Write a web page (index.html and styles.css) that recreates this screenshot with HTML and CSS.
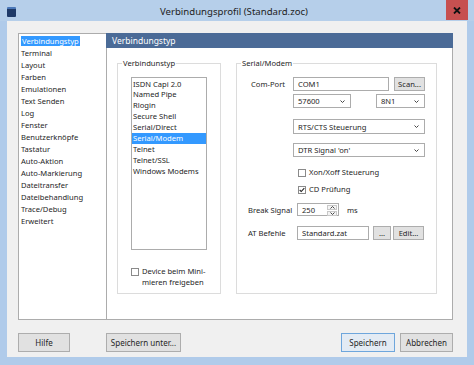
FILE: index.html
```html
<!DOCTYPE html>
<html lang="de">
<head>
    <meta charset="UTF-8">
    <title>Verbindungsprofil (Standard.zoc)</title>
    <link rel="stylesheet" href="styles.css">
</head>
<body>
    <div class="window">
        <div class="titlebar">
            <span class="app-icon"></span>
            <span class="title">Verbindungsprofil (Standard.zoc)</span>
            <span class="close">
                <svg width="8" height="7" viewBox="0 0 8 7"><path d="M1 0.5 L7 6.5 M7 0.5 L1 6.5" stroke="#111" stroke-width="1.8"/></svg>
            </span>
        </div>
        <div class="client">
            <div class="main">
                <ul class="nav">
                    <li><span class="sel">Verbindungstyp</span></li>
                    <li>Terminal</li>
                    <li>Layout</li>
                    <li>Farben</li>
                    <li>Emulationen</li>
                    <li>Text Senden</li>
                    <li>Log</li>
                    <li>Fenster</li>
                    <li>Benutzerknöpfe</li>
                    <li>Tastatur</li>
                    <li>Auto-Aktion</li>
                    <li>Auto-Markierung</li>
                    <li>Dateitransfer</li>
                    <li>Dateibehandlung</li>
                    <li>Trace/Debug</li>
                    <li>Erweitert</li>
                </ul>
                <div class="panel">
                    <div class="panel-head">Verbindungstyp</div>
                    <div class="panel-body">
                        <div class="group group-type">
                            <div class="group-title">Verbindunstyp</div>
                            <ul class="listbox">
                                <li>ISDN Capi 2.0</li>
                                <li>Named Pipe</li>
                                <li>Rlogin</li>
                                <li>Secure Shell</li>
                                <li>Serial/Direct</li>
                                <li class="sel">Serial/Modem</li>
                                <li>Telnet</li>
                                <li>Telnet/SSL</li>
                                <li>Windows Modems</li>
                            </ul>
                            <div class="check check-device">
                                <span class="box"></span>
                                <span>Device beim Mini-<br>mieren freigeben</span>
                            </div>
                        </div>
                        <div class="group group-serial">
                            <div class="group-title">Serial/Modem</div>
                            <div class="row r1">
                                <span class="row-label">Com-Port</span>
                                <span class="field w96">COM1</span>
                                <span class="btn small w31">Scan...</span>
                            </div>
                            <div class="row r2">
                                <span class="row-label"></span>
                                <span class="combo w58">57600<svg class="chev" width="5" height="3" viewBox="0 0 5 3"><path d="M0.5 0.5 L2.5 2.5 L4.5 0.5" fill="none" stroke="#444"/></svg></span>
                                <span class="combo w49 gap25">8N1<svg class="chev" width="5" height="3" viewBox="0 0 5 3"><path d="M0.5 0.5 L2.5 2.5 L4.5 0.5" fill="none" stroke="#444"/></svg></span>
                            </div>
                            <div class="row r3">
                                <span class="row-label"></span>
                                <span class="combo w132">RTS/CTS Steuerung<svg class="chev" width="5" height="3" viewBox="0 0 5 3"><path d="M0.5 0.5 L2.5 2.5 L4.5 0.5" fill="none" stroke="#444"/></svg></span>
                            </div>
                            <div class="row r4">
                                <span class="row-label"></span>
                                <span class="combo w132">DTR Signal 'on'<svg class="chev" width="5" height="3" viewBox="0 0 5 3"><path d="M0.5 0.5 L2.5 2.5 L4.5 0.5" fill="none" stroke="#444"/></svg></span>
                            </div>
                            <div class="row r5">
                                <span class="row-label"></span>
                                <span class="check"><span class="box"></span><span>Xon/Xoff Steuerung</span></span>
                            </div>
                            <div class="row r6">
                                <span class="row-label"></span>
                                <span class="check"><span class="box checked"><svg width="7" height="6" viewBox="0 0 7 6"><path d="M0.8 3 L2.6 4.8 L6.2 0.8" fill="none" stroke="#222" stroke-width="1.3"/></svg></span><span>CD Prüfung</span></span>
                            </div>
                            <div class="row r7">
                                <span class="row-label wide">Break Signal</span>
                                <span class="spin">
                                    <span class="spin-value">250</span>
                                    <span class="spin-arrows">
                                        <span class="arrow"><svg width="5" height="3" viewBox="0 0 5 3"><path d="M0.5 2.5 L2.5 0.5 L4.5 2.5" fill="none" stroke="#444"/></svg></span>
                                        <span class="arrow"><svg width="5" height="3" viewBox="0 0 5 3"><path d="M0.5 0.5 L2.5 2.5 L4.5 0.5" fill="none" stroke="#444"/></svg></span>
                                    </span>
                                </span>
                                <span class="unit">ms</span>
                            </div>
                            <div class="row r8">
                                <span class="row-label wide">AT Befehle</span>
                                <span class="field w72">Standard.zat</span>
                                <span class="btn small w18">...</span>
                                <span class="btn small w31 gap2">Edit...</span>
                            </div>
                        </div>
                    </div>
                </div>
            </div>
            <div class="buttons">
                <span class="btn w52">Hilfe</span>
                <span class="btn w75 push36">Speichern unter...</span>
                <span class="spacer"></span>
                <span class="btn default w54">Speichern</span>
                <span class="btn w53">Abbrechen</span>
            </div>
        </div>
    </div>
</body>
</html>
```

FILE: styles.css
```css
* {
    box-sizing: border-box;
}
html, body {
    margin: 0;
    padding: 0;
}
body {
    font-family: 'Noto Sans', 'Open Sans', sans-serif;
    font-size: 7.6px;
    color: #262626;
    background: #b0cbea;
}
ul {
    list-style: none;
    margin: 0;
    padding: 0;
}
.window {
    width: 474px;
    height: 365px;
    background: #b0cbea;
    display: flex;
    flex-direction: column;
}
.titlebar {
    height: 21px;
    display: flex;
    align-items: center;
    background: #b6cfea;
}
.app-icon {
    width: 9px;
    height: 10px;
    margin: 3px 0 0 7px;
    background: #1f3a68;
    border-top: 2px solid #4b78b8;
    border-radius: 1px;
}
.title {
    flex: 1;
    text-align: center;
    font-size: 9.6px;
    color: #222;
    padding: 2px 0 0 6px;
}
.close {
    width: 22px;
    height: 20px;
    margin: 0 6px 1px 0;
    align-self: flex-start;
    background: #c75050;
    display: flex;
    align-items: center;
    justify-content: center;
}
.client {
    margin: 0 7px 8px 7px;
    height: 336px;
    background: #f0f0f0;
    padding: 12px 14px 0 11px;
}
.main {
    display: flex;
    height: 287px;
}
.nav {
    width: 88px;
    background: #fff;
    border: 1px solid #acacac;
    border-right: none;
    padding-top: 1px;
}
.nav li {
    line-height: 12px;
    height: 12px;
    padding-left: 2px;
    white-space: nowrap;
}
.nav .sel {
    background: #3399ff;
    color: #fff;
    padding: 0 1px;
}
.panel {
    flex: 1;
    display: flex;
    flex-direction: column;
    background: #fff;
}
.panel-head {
    height: 15px;
    background: #4b6b97;
    color: #fff;
    font-size: 8.5px;
    line-height: 15px;
    padding-left: 6px;
}
.panel-body {
    flex: 1;
    display: flex;
    gap: 15px;
    padding: 15px 0 0 10px;
    border: 1px solid #acacac;
    border-top: none;
}
.group {
    border: 1px solid #dcdcdc;
    height: 231px;
}
.group-title {
    display: table;
    background: #fff;
    line-height: 11px;
    margin: -6px 0 0 4px;
    padding: 0 1px;
}
.group-type {
    width: 104px;
}
.group-serial {
    width: 201px;
}
.listbox {
    width: 76px;
    height: 173px;
    margin: 8px 0 0 13px;
    border: 1px solid #acacac;
    padding-top: 0.5px;
}
.listbox li {
    line-height: 10.9px;
    height: 10.9px;
    padding-left: 1px;
    white-space: nowrap;
}
.listbox .sel {
    background: #3399ff;
    color: #fff;
}
.check {
    display: flex;
    align-items: flex-start;
    gap: 3px;
    line-height: 11px;
}
.check .box {
    width: 8px;
    height: 8px;
    margin-top: 1.5px;
    border: 1px solid #8a8a8a;
    background: #fff;
    display: flex;
    align-items: center;
    justify-content: center;
    flex: none;
}
.check-device {
    margin: 16px 0 0 13px;
}
.row {
    display: flex;
    align-items: center;
    height: 14px;
}
.row-label {
    width: 56px;
    padding-left: 14px;
    flex: none;
}
.row-label.wide {
    width: 60px;
    padding-left: 11px;
}
.r1 { margin-top: 8px; }
.r2 { margin-top: 3px; }
.r3 { margin-top: 11px; height: 15px; }
.r4 { margin-top: 9px; }
.r5 { margin-top: 10px; height: 11px; }
.r6 { margin-top: 6px; height: 11px; }
.r7 { margin-top: 8px; height: 13px; }
.r8 { margin-top: 10px; }
.r5 .check, .r6 .check {
    margin-left: 5px;
}
.field, .combo, .spin {
    height: 100%;
    border: 1px solid #acacac;
    background: #fff;
    display: flex;
    align-items: center;
    padding-left: 4px;
    white-space: nowrap;
}
.chev {
    margin-left: auto;
    margin-right: 5px;
}
.btn {
    height: 19px;
    border: 1px solid #adadad;
    background: #e1e1e1;
    display: flex;
    align-items: center;
    justify-content: center;
    white-space: nowrap;
    font-size: 8px;
}
.btn.small {
    height: 100%;
    margin-left: 5px;
    font-size: 7.6px;
}
.btn.small.w18 {
    margin-left: 4px;
}
.btn.small.gap2 {
    margin-left: 2px;
}
.btn.default {
    border-color: #6ea6dc;
    background: #e3ebf4;
}
.w18 { width: 18px; }
.w31 { width: 31px; }
.w49 { width: 49px; }
.w52 { width: 52px; }
.w53 { width: 53px; }
.w54 { width: 54px; margin-right: 5px; }
.w58 { width: 58px; }
.w72 { width: 72px; }
.w75 { width: 75px; }
.w96 { width: 96px; }
.w132 { width: 132px; }
.gap25 { margin-left: 25px; }
.push36 { margin-left: 36px; }
.spin {
    width: 42px;
    padding-right: 0;
}
.spin-value {
    flex: 1;
}
.spin-arrows {
    width: 11px;
    height: 100%;
    display: flex;
    flex-direction: column;
    gap: 1px;
    padding: 1px 1px 1px 0;
}
.arrow {
    flex: 1;
    border: 1px solid #c8c8c8;
    background: #f4f4f4;
    display: flex;
    align-items: center;
    justify-content: center;
}
.unit {
    margin-left: 8px;
}
.buttons {
    display: flex;
    margin-top: 13px;
}
.spacer {
    flex: 1;
}
```
